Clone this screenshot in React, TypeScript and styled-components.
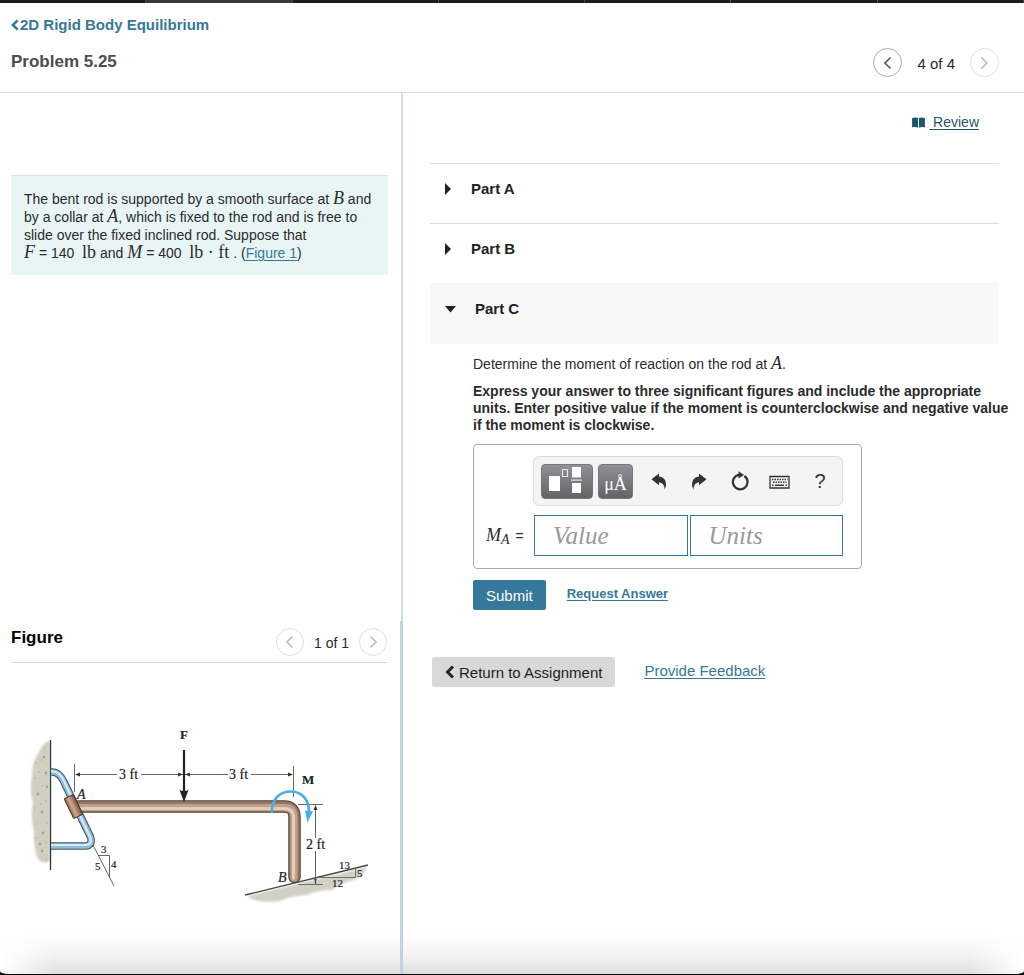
import React from "react";
import styled, { createGlobalStyle } from "styled-components";

const sans = `"Liberation Sans", Arial, Helvetica, sans-serif`;
const serif = `"Liberation Serif", "Times New Roman", serif`;
const teal = "#367899";

const GlobalStyle = createGlobalStyle`
  *, *::before, *::after { box-sizing: border-box; }
  html { background: #08080c; }
  body { margin: 0; font-family: ${sans}; font-size: 14px; color: #2b2b2b; }
  h1, h2, h3, p { margin: 0; }
  button { font-family: inherit; }
`;

const Page = styled.div`
  min-height: 100vh;
  display: flex;
  flex-direction: column;
  background:
    linear-gradient(90deg, #fff 0, rgba(255, 255, 255, 0) 56px, rgba(255, 255, 255, 0) calc(100% - 56px), #fff 100%),
    linear-gradient(0deg, #dedede 0, #f1f1f1 16px, #fff 40px);
  border-bottom: 1px solid #08080c;
  border-radius: 0 0 8px 8px / 0 0 4px 4px;
`;

const TabStrip = styled.div`
  height: 3px;
  display: grid;
  grid-template-columns: repeat(7, 1fr);
  background: #1e1c21;
`;

const TabEdge = styled.span<{ $active?: boolean }>`
  background: ${(p) => (p.$active ? "#38363c" : "#1e1c21")};
  border-right: 1px solid #49474d;
`;

const Header = styled.header`
  display: flex;
  justify-content: space-between;
  align-items: flex-end;
  height: 90px;
  padding: 13px 25px 15px 11px;
  border-bottom: 1px solid #dcdcdc;
`;

const Titles = styled.div`
  align-self: flex-start;
  display: flex;
  flex-direction: column;
  gap: 18px;
`;

const BackLink = styled.a`
  display: flex;
  align-items: center;
  gap: 1px;
  font-size: 15px;
  line-height: 18px;
  font-weight: bold;
  color: ${teal};
  text-decoration: none;
`;

const ProblemTitle = styled.h1`
  font-size: 17px;
  line-height: 20px;
  color: #4c4c4c;
`;

const Pager = styled.nav<{ $small?: boolean }>`
  display: flex;
  align-items: center;
  gap: ${(p) => (p.$small ? 10 : 15)}px;
  font-size: ${(p) => (p.$small ? 14 : 15)}px;
  line-height: 18px;
  span { padding-top: 3px; }
`;

const RoundButton = styled.button<{ $faint?: boolean; $size: number }>`
  width: ${(p) => p.$size}px;
  height: ${(p) => p.$size}px;
  display: grid;
  place-items: center;
  padding: 0;
  border: 1px solid ${(p) => (p.$faint ? "#dfdfdf" : "#a9a9a9")};
  border-radius: 50%;
  background: #fff;
  color: ${(p) => (p.$faint ? "#bdbdbd" : "#5e5e5e")};
`;

const Columns = styled.div`
  flex: 1;
  display: grid;
  grid-template-columns: minmax(0, 403fr) minmax(0, 621fr);
`;

const LeftColumn = styled.aside`
  display: flex;
  flex-direction: column;
`;

const QuestionPane = styled.section`
  flex: 1;
  padding: 82px 13px 24px 11px;
  border-right: 2px solid #d3dde9;
`;

const Statement = styled.p`
  padding: 14px 12px 13px 13px;
  border-top: 1px solid #dde3e3;
  background: #e8f5f5;
  line-height: 18px;
`;

const MathText = styled.span<{ $upright?: boolean }>`
  font-family: ${serif};
  font-size: 18px;
  line-height: 1px;
  font-style: ${(p) => (p.$upright ? "normal" : "italic")};
`;

const TextLink = styled.a<{ $bold?: boolean; $size?: number }>`
  font-size: ${(p) => p.$size ?? 14}px;
  font-weight: ${(p) => (p.$bold ? "bold" : "normal")};
  color: ${teal};
  text-underline-offset: 2px;
`;

const FigurePane = styled.section`
  padding: 0 13px 47px 11px;
  border-right: 3px solid #c5d1df;
`;

const FigureHeader = styled.div`
  display: flex;
  justify-content: space-between;
  align-items: center;
  height: 42px;
  border-bottom: 1px solid #d9d9d9;
  h2 { font-size: 17px; line-height: 20px; padding-bottom: 8px; color: #000; }
`;

const Drawing = styled.svg`
  display: block;
  margin: 52px 0 0 9px;
  font-family: ${serif};
`;

const Main = styled.main`
  padding: 20px 25px 24px 27px;
`;

const ReviewRow = styled.div`
  display: flex;
  justify-content: flex-end;
  align-items: center;
  gap: 4px;
  height: 18px;
  padding-right: 20px;
  margin-bottom: 32px;
  color: #1d566b;
  a { color: inherit; white-space: pre; }
`;

const PartRow = styled.button<{ $open?: boolean }>`
  width: 100%;
  display: flex;
  align-items: center;
  gap: ${(p) => (p.$open ? 19 : 20)}px;
  height: ${(p) => (p.$open ? 61 : 60)}px;
  padding: 0 15px 10px;
  border: 0;
  border-top: ${(p) => (p.$open ? "0" : "1px solid #dcdcdc")};
  background: ${(p) => (p.$open ? "#f8f8f8" : "transparent")};
  font-size: 15px;
  font-weight: bold;
  color: #222;
  text-align: left;
`;

const PartBody = styled.section`
  padding: 10px 0 0 43px;
`;

const Prompt = styled.p`
  line-height: 20px;
  padding-bottom: 9px;
`;

const Instructions = styled.p`
  margin-right: -20px;
  font-weight: bold;
  line-height: 17px;
  padding-bottom: 10px;
`;

const AnswerBox = styled.div`
  width: 389px;
  max-width: 100%;
  padding: 11px 18px 12px 12px;
  border: 1px solid #a9a9a9;
  border-radius: 4px;
`;

const Toolbar = styled.div`
  display: flex;
  align-items: center;
  gap: 5px;
  height: 50px;
  margin: 0 0 9px 47px;
  padding: 0 7px;
  border: 1px solid #dcdcdc;
  border-radius: 6px;
  background: #f4f4f4;
`;

const DarkTool = styled.button<{ $wide?: boolean }>`
  width: ${(p) => (p.$wide ? 52 : 35)}px;
  height: 35px;
  display: grid;
  place-items: center;
  padding: ${(p) => (p.$wide ? 0 : 5)}px 0 0;
  border: 1px solid #77777b;
  border-radius: 4px;
  background: linear-gradient(#919196, #646466);
  color: #fff;
  font-family: ${serif};
  font-size: 18px;
  line-height: 24px;
`;

const PlainTools = styled.div`
  flex: 1;
  display: flex;
  justify-content: space-between;
  padding: 0 0 0 6px;
`;

const PlainTool = styled.button`
  width: 30px;
  height: 32px;
  display: grid;
  place-items: center;
  padding: 0;
  border: 0;
  background: none;
  color: #333;
  font-size: 20px;
`;

const AnswerRow = styled.div`
  display: flex;
  align-items: center;
  gap: 2px;
`;

const AnswerLabel = styled.label`
  width: 46px;
  white-space: nowrap;
  font-family: ${serif};
  font-size: 18px;
  line-height: 20px;
  font-style: italic;
  sub { font-size: 14px; line-height: 1px; vertical-align: -3px; }
  span { font-family: ${sans}; font-size: 14px; font-style: normal; padding-left: 6px; }
`;

const AnswerInput = styled.input`
  flex: 1;
  min-width: 0;
  height: 41px;
  padding: 0 18px;
  border: 1px solid ${teal};
  border-radius: 0;
  outline: 0;
  font-family: ${serif};
  font-size: 25px;
  font-style: italic;
  background: #fff;
  &::placeholder { color: #999; opacity: 1; }
`;

const Actions = styled.div<{ $outer?: boolean }>`
  display: flex;
  align-items: center;
  gap: ${(p) => (p.$outer ? 29 : 21)}px;
  padding: ${(p) => (p.$outer ? "47px 0 0 2px" : "11px 0 0")};
  a { padding-bottom: 3px; }
`;

const ActionButton = styled.button<{ $primary?: boolean }>`
  height: 30px;
  display: flex;
  align-items: center;
  gap: 4px;
  padding: 0 13px;
  border: 0;
  border-radius: 2px;
  background: ${(p) => (p.$primary ? teal : "#d8d8d8")};
  color: ${(p) => (p.$primary ? "#fff" : "#222")};
  font-size: 15px;
`;

const Chevron = ({ right, w = 9, h = 14, weight = 1.7 }: { right?: boolean; w?: number; h?: number; weight?: number }) => (
  <svg width={w} height={h} viewBox="0 0 9 14" fill="none" stroke="currentColor" strokeWidth={weight} aria-hidden="true">
    <path d={right ? "M1.500 1.500 7 7l-5.500 5.500" : "M7.500 1.500 2 7l5.500 5.500"} />
  </svg>
);

const BookIcon = () => (
  <svg width="13" height="11" viewBox="0 0 14 12" fill="currentColor" aria-hidden="true">
    <path d="M0 1.200Q3.500 0 6.500 1V11.500Q3.500 10.500 0 11.200zM7.500 1Q10.500 0 14 1.200V11.200Q10.500 10.500 7.500 11.500z" />
  </svg>
);

const Caret = ({ down }: { down?: boolean }) => (
  <svg width={down ? 11 : 6} height="12" viewBox={down ? "0 0 11 12" : "0 0 6 12"} fill="#222" aria-hidden="true">
    <path d={down ? "M0 3h11L5.500 9.500z" : "M0 0v12l6-6z"} />
  </svg>
);

const TemplateIcon = () => (
  <svg width="36" height="28" viewBox="0 0 36 28" aria-hidden="true">
    <path fill="#fff" d="M0 9h11v15H0zM23 0h9v10.500h-9zM23 16h9v10h-9z" />
    <path fill="none" stroke="#e5e5e5" strokeWidth="1.200" d="M13.500 2.500h5v7h-5zM22 13.200h11" />
  </svg>
);

const UndoIcon = ({ flip }: { flip?: boolean }) => (
  <svg width="16" height="17" viewBox="0 0 16 17" fill="currentColor" aria-hidden="true">
    <path
      transform={flip ? "matrix(-1 0 0 1 16 0)" : undefined}
      d="M.500 6.200 8 .500V3.600Q15 4.500 15 11.500 15 14 13.500 16.500 13.500 9.700 8 9.200V12.200z"
    />
  </svg>
);

const ResetIcon = () => (
  <svg width="18" height="20" viewBox="0 0 18 20" aria-hidden="true">
    <path d="M13.400 5A7.300 7.300 0 1 1 8 3.800" fill="none" stroke="currentColor" strokeWidth="2.200" />
    <path d="M7.500.300 13 4 7.500 7.500z" fill="currentColor" />
  </svg>
);

const KeyboardIcon = () => (
  <svg width="21" height="16" viewBox="0 -2 21 16" fill="none" stroke="currentColor" aria-hidden="true">
    <path strokeWidth="1.300" d="M1 1.500h19v11.500H1z" />
    <path strokeWidth="1.500" strokeDasharray="1.500 1" d="M3 4.500h15.500M4 7.200h13.500" />
    <path strokeWidth="1.500" d="M3 10.200h1.500M6 10.200h9M16.500 10.200h1.500" />
  </svg>
);

const pebbles = [
  [44, 757], [42, 760], [36, 763], [46, 773], [35, 778], [42, 786], [38, 794], [46, 801],
  [35, 808], [42, 812], [47, 823], [37, 824], [43, 833], [36, 838], [46, 843], [42, 851],
  [46, 859], [39, 772], [47, 787], [41, 804], [45, 748], [40, 844],
];

const RodFigure = () => (
  <Drawing width="360" height="212" viewBox="20 715 360 212" role="img" aria-label="Bent rod supported at A and B">
    <defs>
      <filter id="soft" x="-20%" y="-20%" width="140%" height="140%">
        <feGaussianBlur stdDeviation="0.900" />
      </filter>
      <linearGradient id="collar" x1="0" x2="1">
        <stop offset="0" stopColor="#93694f" />
        <stop offset=".4" stopColor="#cfa98d" />
        <stop offset="1" stopColor="#785341" />
      </linearGradient>
    </defs>

    <path
      filter="url(#soft)"
      fill="#d0cfc0"
      d="M50 741Q43 742 39 752 32 761 32 777 29 790 33 803 30 817 34 832 33 847 38 859 43 865 50 861z"
    />
    {pebbles.map(([x, y], i) => (
      <circle key={i} cx={x} cy={y} r={i % 3 ? 0.7 : 1.4} fill="#a0a49e" />
    ))}
    <path d="M50.500 740V870" stroke="#333" strokeWidth="1.300" />

    <g fill="none" strokeLinejoin="round">
      <path d="M51 772Q59 771 64 782L90.500 837Q93 845 86 846H51" stroke="#3d5260" strokeWidth="7.500" />
      <path d="M51 772Q59 771 64 782L90.500 837Q93 845 86 846H51" stroke="#91bdd8" strokeWidth="5.500" />
      <path d="M51 771.500Q59 770.500 64 781L90 837Q93 844 86 845H51" stroke="#d4eafa" strokeWidth="2.200" />
    </g>

    <g fill="none" strokeLinecap="round">
      <path d="M79 806.500H284Q294.500 806.500 294.500 817V877" stroke="#4f4239" strokeWidth="12.500" />
      <path d="M79 806.500H284Q294.500 806.500 294.500 817V877" stroke="#957664" strokeWidth="10.500" />
      <path d="M80 807.500H284Q294 807.500 294 817V878" stroke="#c0a088" strokeWidth="7" />
      <path d="M80 808.500H284Q293.500 808.500 293.500 817V878" stroke="#e3cdbb" strokeWidth="3" />
    </g>
    <rect x="68.500" y="795.500" width="10" height="22" rx="1" fill="url(#collar)" stroke="#4c3022" transform="rotate(-26 73.500 806.500)" />

    <g fill="none" stroke="#555" strokeWidth=".9">
      <path d="M74.500 764V792M293.500 766V797M76 774.500H117M141 774.500H228M251 774.500H292" />
      <path d="M298 804.500H323M298 884.500H323M315.500 806V838M315.500 851V884" />
      <path d="M93 845 114 886M98 855.500H109.500V878M319 877.500H355.500V868" />
    </g>
    <path
      fill="#333"
      d="M75 774.500l5-2v4zM183 774.500l-5-2v4zM185 774.500l5-2v4zM293 774.500l-5-2v4zM315.500 805l-2 5h4zM315.500 884l-2-5h4z"
    />
    <path d="M184 750V792" stroke="#222" strokeWidth="2.200" />
    <path d="M179.500 790Q184 792 188.500 790L184 802z" fill="#222" />

    <path
      filter="url(#soft)"
      fill="#d0d0c3"
      d="M247 896 297 884 367 867Q364 876 354 880 341 882 332 890 318 890 307 895 290 896 280 901 257 904 247 896z"
    />
    <path d="M245 895 368 865" stroke="#444" strokeWidth="1.300" />
    <path d="M298 884.500H323M319 877.500H355.500V868" stroke="#666" strokeWidth=".9" fill="none" />
    <path d="M315.500 879V884" stroke="#333" />

    <path d="M272 813C271 799 280 791.500 291 791.500 303 791.500 309 801 309 812" fill="none" stroke="#48adec" strokeWidth="2.600" />
    <path d="M305 810.500 313 811.500 307.500 822.500z" fill="#48adec" />

    <g fill="#222" fontSize="14" stroke="#222" strokeWidth=".2">
      <text x="119" y="779">3 ft</text>
      <text x="229" y="779">3 ft</text>
      <text x="306" y="849">2 ft</text>
      <text x="180" y="739" fontSize="13" fontWeight="bold">F</text>
      <text x="302" y="784" fontSize="13" fontWeight="bold">M</text>
      <text x="77" y="799" fontStyle="italic">A</text>
      <text x="278" y="882" fontStyle="italic">B</text>
    </g>
    <g fill="#222" fontSize="11" stroke="#222" strokeWidth=".2">
      <text x="101" y="853">3</text>
      <text x="111" y="868">4</text>
      <text x="95" y="870">5</text>
      <text x="339" y="869">13</text>
      <text x="357" y="877">5</text>
      <text x="332" y="887">12</text>
    </g>
  </Drawing>
);

export default function App() {
  return (
    <>
      <GlobalStyle />
      <Page>
        <TabStrip>
          {[0, 1, 2, 3, 4, 5, 6].map((n) => (
            <TabEdge key={n} $active={n === 1} />
          ))}
        </TabStrip>
        <Header>
          <Titles>
            <BackLink href="#assignment">
              <Chevron w={8} h={12} weight={3} />
              2D Rigid Body Equilibrium
            </BackLink>
            <ProblemTitle>Problem 5.25</ProblemTitle>
          </Titles>
          <Pager aria-label="Problems">
            <RoundButton $size={29} aria-label="Previous problem"><Chevron /></RoundButton>
            <span>4 of 4</span>
            <RoundButton $size={29} $faint aria-label="Next problem"><Chevron right /></RoundButton>
          </Pager>
        </Header>
        <Columns>
          <LeftColumn>
            <QuestionPane>
              <Statement>
                The bent rod is supported by a smooth surface at <MathText>B</MathText> and
                <br />
                by a collar at <MathText>A</MathText>, which is fixed to the rod and is free to
                <br />
                slide over the fixed inclined rod. Suppose that
                <br />
                <MathText>F</MathText> = 140 &nbsp;<MathText $upright>lb</MathText> and <MathText>M</MathText> = 400
                &nbsp;<MathText $upright>lb · ft</MathText> . (<TextLink href="#figure">Figure 1</TextLink>)
              </Statement>
            </QuestionPane>
            <FigurePane id="figure">
              <FigureHeader>
                <h2>Figure</h2>
                <Pager $small aria-label="Figures">
                  <RoundButton $size={28} $faint aria-label="Previous figure"><Chevron /></RoundButton>
                  <span>1 of 1</span>
                  <RoundButton $size={28} $faint aria-label="Next figure"><Chevron right /></RoundButton>
                </Pager>
              </FigureHeader>
              <RodFigure />
            </FigurePane>
          </LeftColumn>
          <Main>
            <ReviewRow>
              <BookIcon />
              <TextLink href="#review">{" Review"}</TextLink>
            </ReviewRow>
            <PartRow aria-expanded="false"><Caret />Part A</PartRow>
            <PartRow aria-expanded="false"><Caret />Part B</PartRow>
            <PartRow $open aria-expanded="true"><Caret down />Part C</PartRow>
            <PartBody>
              <Prompt>
                Determine the moment of reaction on the rod at <MathText>A</MathText>.
              </Prompt>
              <Instructions>
                Express your answer to three significant figures and include the appropriate
                <br />
                units. Enter positive value if the moment is counterclockwise and negative value
                <br />
                if the moment is clockwise.
              </Instructions>
              <AnswerBox>
                <Toolbar role="toolbar" aria-label="Answer tools">
                  <DarkTool $wide aria-label="Templates"><TemplateIcon /></DarkTool>
                  <DarkTool aria-label="Units symbols">μÅ</DarkTool>
                  <PlainTools>
                    <PlainTool aria-label="Undo"><UndoIcon /></PlainTool>
                    <PlainTool aria-label="Redo"><UndoIcon flip /></PlainTool>
                    <PlainTool aria-label="Reset"><ResetIcon /></PlainTool>
                    <PlainTool aria-label="Keyboard shortcuts"><KeyboardIcon /></PlainTool>
                    <PlainTool aria-label="Help">?</PlainTool>
                  </PlainTools>
                </Toolbar>
                <AnswerRow>
                  <AnswerLabel htmlFor="value">
                    M<sub>A</sub>
                    <span>=</span>
                  </AnswerLabel>
                  <AnswerInput id="value" placeholder="Value" />
                  <AnswerInput aria-label="Units" placeholder="Units" />
                </AnswerRow>
              </AnswerBox>
              <Actions>
                <ActionButton $primary>Submit</ActionButton>
                <TextLink href="#answer" $bold $size={13}>Request Answer</TextLink>
              </Actions>
            </PartBody>
            <Actions $outer>
              <ActionButton><Chevron w={10} h={14} weight={3} />Return to Assignment</ActionButton>
              <TextLink href="#feedback" $size={15}>Provide Feedback</TextLink>
            </Actions>
          </Main>
        </Columns>
      </Page>
    </>
  );
}
